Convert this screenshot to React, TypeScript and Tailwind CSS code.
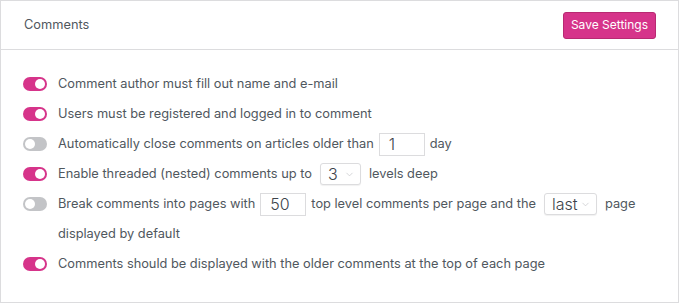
import React from "react";
import { ChevronDown } from "lucide-react";

const Toggle = ({ on }: { on: boolean }) => (
  <span
    className={
      "relative inline-block h-[14px] w-[24px] shrink-0 rounded-full " +
      (on ? "bg-[#d6348a]" : "bg-[#c3c4c7]")
    }
  >
    <span
      className={
        "absolute top-[2px] h-[10px] w-[10px] rounded-full bg-white " +
        (on ? "right-[2px]" : "left-[2px]")
      }
    />
  </span>
);

const NumBox = ({ value, w }: { value: string; w: string }) => (
  <span
    className={
      "mx-[5px] inline-flex h-[23px] items-center border border-[#dcdcde] bg-white pl-[9px] text-[16px] font-light text-[#3c434a] " +
      w
    }
  >
    {value}
  </span>
);

const SelectBox = ({ value, w }: { value: string; w: string }) => (
  <span
    className={
      "ml-[8px] mr-[8px] inline-flex h-[22px] items-center justify-between rounded-[3px] border border-[#dcdcde] bg-white pl-[7px] pr-[5px] text-[16px] font-light text-[#3c434a] shadow-[0_1px_1px_rgba(0,0,0,0.06)] " +
      w
    }
  >
    {value}
    <ChevronDown size={11} strokeWidth={1.5} className="text-[#c3c4c7]" />
  </span>
);

const Row = ({ on, children }: { on: boolean; children: React.ReactNode }) => (
  <div className="flex h-[30px] items-center">
    <Toggle on={on} />
    <div className="ml-[11px] flex items-center">{children}</div>
  </div>
);

export default function App() {
  return (
    <div
      className="h-[304px] w-[680px] bg-white"
      style={{ fontFamily: "Inter, 'Liberation Sans', sans-serif" }}
    >
      <div className="h-[303px] w-[679px] border border-[#dcdcde]">
        <header className="flex h-[49px] items-center justify-between border-b border-[#dcdcde] pl-[23px] pr-[22px]">
          <h2 className="text-[12.8px] text-[#50575e]">Comments</h2>
          <button className="h-[27px] rounded-[3px] border border-[#b82a72] bg-[#d6348a] px-[7px] text-[12px] text-white">
            Save Settings
          </button>
        </header>

        <div className="pl-[22px] pt-[19px] text-[12.8px] text-[#50575e]">
          <Row on>Comment author must fill out name and e-mail</Row>
          <Row on>Users must be registered and logged in to comment</Row>
          <Row on={false}>
            Automatically close comments on articles older than
            <NumBox value="1" w="w-[46px]" />
            day
          </Row>
          <Row on>
            Enable threaded (nested) comments up to
            <SelectBox value="3" w="w-[41px]" />
            levels deep
          </Row>
          <Row on={false}>
            Break comments into pages with
            <NumBox value="50" w="w-[46px]" />
            top level comments per page and the
            <SelectBox value="last" w="w-[53px]" />
            page
          </Row>
          <div className="flex h-[30px] items-center pl-[35px]">displayed by default</div>
          <Row on>Comments should be displayed with the older comments at the top of each page</Row>
        </div>
      </div>
    </div>
  );
}
